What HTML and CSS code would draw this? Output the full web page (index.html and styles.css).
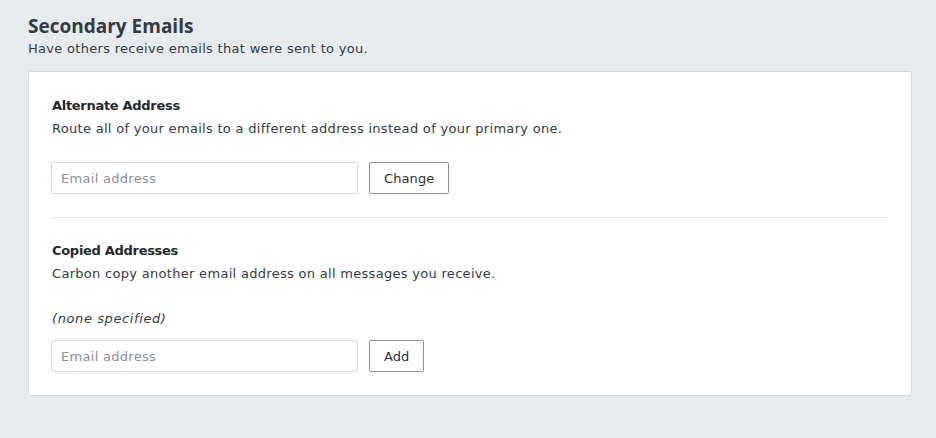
FILE: index.html
```html
<!DOCTYPE html>
<html lang="en">
<head>
  <meta charset="UTF-8">
  <title>Secondary Emails</title>
  <link rel="stylesheet" href="styles.css">
</head>
<body>
  <section class="settings">
    <h1 class="settings-title">Secondary Emails</h1>
    <p class="settings-sub">Have others receive emails that were sent to you.</p>

    <div class="card">
      <div class="block">
        <h2 class="block-title">Alternate Address</h2>
        <p class="block-desc">Route all of your emails to a different address instead of your primary one.</p>
        <form class="row">
          <input class="field" type="text" placeholder="Email address">
          <button class="btn" type="button">Change</button>
        </form>
      </div>

      <hr class="divider">

      <div class="block">
        <h2 class="block-title">Copied Addresses</h2>
        <p class="block-desc">Carbon copy another email address on all messages you receive.</p>
        <p class="none">(none specified)</p>
        <form class="row">
          <input class="field" type="text" placeholder="Email address">
          <button class="btn" type="button">Add</button>
        </form>
      </div>
    </div>
  </section>
</body>
</html>
```

FILE: styles.css
```css
/* Base */
body {
  margin: 0;
  background: #e8ebee;
  font-family: 'DejaVu Sans', sans-serif;
  font-size: 13px;
  letter-spacing: 0.3px;
  color: #2f3640;
}

.settings {
  padding: 14px 24px 0 28px;
}

.settings-title {
  margin: 0;
  font-family: 'Open Sans', sans-serif;
  font-size: 19px;
  font-weight: 700;
  line-height: 24px;
  letter-spacing: 0;
  color: #333a42;
}

.settings-sub {
  margin: 2px 0 0;
  line-height: 18px;
  color: #333a42;
}

/* Card */
.card {
  margin-top: 13px;
  background: #fff;
  border: 1px solid #d5d9dd;
  border-radius: 3px;
  padding: 25px 23px 23px;
}

.block-title {
  margin: 0;
  font-size: 13px;
  font-weight: 700;
  line-height: 18px;
  letter-spacing: -0.3px;
  color: #23282e;
}

.block-desc {
  margin: 5px 0 0;
  line-height: 18px;
  color: #333a42;
}

.none {
  margin: 27px 0 0;
  font-style: italic;
  line-height: 18px;
  letter-spacing: 0.6px;
  color: #333a42;
}

.row {
  display: flex;
  gap: 11px;
  margin-top: 24px;
}

.none + .row {
  margin-top: 12px;
}

.field {
  box-sizing: border-box;
  width: 307px;
  height: 32px;
  margin-left: -1px;
  padding: 0 9px;
  border: 1px solid #d6dadf;
  border-radius: 2px;
  font-family: inherit;
  font-size: 13px;
  letter-spacing: 0.3px;
  color: #333a42;
}

.field::placeholder {
  color: #8a9099;
}

.btn {
  box-sizing: border-box;
  height: 32px;
  padding: 0 14px;
  background: #fff;
  border: 1px solid #8b9097;
  border-radius: 2px;
  font-family: inherit;
  font-size: 13px;
  letter-spacing: 0.1px;
  color: #2a3038;
  cursor: pointer;
}

.divider {
  margin: 23px 0 24px;
  border: 0;
  border-top: 1px solid #dde1e5;
}
```
